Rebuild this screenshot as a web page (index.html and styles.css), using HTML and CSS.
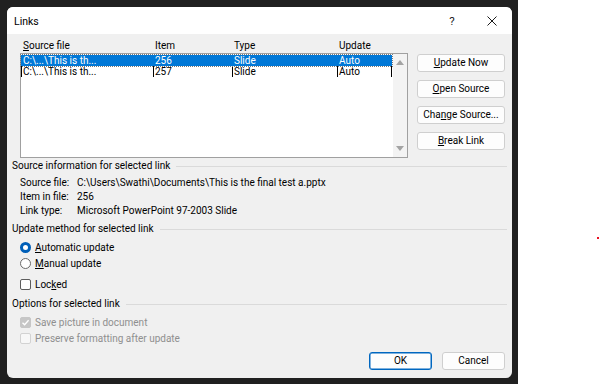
FILE: index.html
```html
<!DOCTYPE html>
<html>
<head>
<meta charset="utf-8">
<link rel="stylesheet" href="styles.css">
</head>
<body>
<div class="screen">
  <div class="frame">
    <div class="dialog">
      <div class="titlebar">
        <span class="title">Links</span>
        <span class="tbtn help">?</span>
        <span class="tbtn close">
          <svg width="10" height="10" viewBox="0 0 10 10"><path d="M0.5 0.5 L9.5 9.5 M9.5 0.5 L0.5 9.5" stroke="#1a1a1a" stroke-width="1" fill="none"/></svg>
        </span>
      </div>
      <div class="body">
        <div class="top">
          <div class="listcol">
            <div class="cols head">
              <span><u>S</u>ource file</span><span>Item</span><span>Type</span><span>Update</span>
            </div>
            <div class="listbox">
              <div class="rows">
                <div class="cols row sel">
                  <span>C:\...\This is th...</span><span>256</span><span>Slide</span><span>Auto</span>
                </div>
                <div class="cols row marked">
                  <span>C:\...\This is th...</span><span>257</span><span>Slide</span><span>Auto</span>
                </div>
              </div>
              <div class="vscroll">
                <svg width="8" height="5" viewBox="0 0 8 5"><path d="M0 5 L4 0 L8 5 Z" fill="#a3a3a3"/></svg>
                <svg width="8" height="5" viewBox="0 0 8 5"><path d="M0 0 L8 0 L4 5 Z" fill="#a3a3a3"/></svg>
              </div>
            </div>
          </div>
          <div class="btncol">
            <div class="btn"><u>U</u>pdate Now</div>
            <div class="btn"><u>O</u>pen Source</div>
            <div class="btn">Cha<u>n</u>ge Source...</div>
            <div class="btn"><u>B</u>reak Link</div>
          </div>
        </div>

        <div class="group g1"><span>Source information for selected link</span><i class="rule"></i></div>
        <div class="info">
          <span>Source file:</span><span>C:\Users\Swathi\Documents\This is the final test a.pptx</span>
          <span>Item in file:</span><span>256</span>
          <span>Link type:</span><span>Microsoft PowerPoint 97-2003 Slide</span>
        </div>

        <div class="group g2"><span>Update method for selected link</span><i class="rule"></i></div>
        <div class="opts first">
          <div class="opt"><i class="radio on"></i><span><u>A</u>utomatic update</span></div>
          <div class="opt"><i class="radio"></i><span><u>M</u>anual update</span></div>
        </div>
        <div class="opts locked">
          <div class="opt"><i class="check"></i><span>Loc<u>k</u>ed</span></div>
        </div>

        <div class="group g3"><span>Options for selected link</span><i class="rule"></i></div>
        <div class="opts first">
          <div class="opt disabled"><i class="check dis-on">
            <svg width="9" height="9" viewBox="0 0 9 9"><path d="M1.5 4.7 L3.6 6.8 L7.6 2.2" stroke="#fff" stroke-width="1.3" fill="none"/></svg>
          </i><span>Save picture in document</span></div>
          <div class="opt disabled"><i class="check dis"></i><span>Preserve formatting after update</span></div>
        </div>

        <div class="footer">
          <div class="btn ok">OK</div>
          <div class="btn">Cancel</div>
        </div>
      </div>
    </div>
  </div>
  <div class="rest"><i class="dot"></i></div>
</div>
</body>
</html>
```

FILE: styles.css
```css
html, body {
  margin: 0;
  padding: 0;
  background: #ffffff;
}
body {
  font-family: Roboto, "Liberation Sans", sans-serif;
  font-size: 10px;
  color: #000;
}
u { text-decoration: underline; text-underline-offset: 1px; }
.screen {
  display: flex;
  width: 600px;
  height: 384px;
}
.frame {
  width: 518px;
  height: 384px;
  box-sizing: border-box;
  padding: 7px 6px 6px 7px;
  background: #202020;
}
.dialog {
  width: 505px;
  height: 371px;
  background: #f0f0f0;
  border-radius: 6px;
  overflow: hidden;
  display: flex;
  flex-direction: column;
}
.titlebar {
  height: 27px;
  background: #ffffff;
  display: flex;
  align-items: center;
  flex: none;
}
.title {
  padding-left: 7px;
  padding-top: 1px;
  font-size: 10.5px;
  flex: 1;
}
.tbtn {
  width: 40px;
  height: 27px;
  display: flex;
  align-items: center;
  justify-content: center;
  font-size: 11.5px;
}
.help { color: #222; }
.body {
  padding: 0 5px 0 5px;
  display: flex;
  flex-direction: column;
}
.top {
  display: flex;
  align-items: flex-start;
}
.listcol {
  margin-left: 8px;
  width: 388px;
}
.cols {
  display: grid;
  grid-template-columns: 132px 79px 105px 55px;
}
.cols > span {
  padding-left: 2px;
  white-space: nowrap;
}
.head {
  margin-top: 5px;
  height: 14px;
  line-height: 14px;
  padding-left: 1px;
}
.listbox {
  height: 105px;
  box-sizing: border-box;
  border: 1px solid #a0a0a0;
  background: #ffffff;
  display: flex;
}
.rows {
  width: 371px;
  padding-top: 1px;
}
.row {
  height: 11px;
  line-height: 11px;
}
.sel {
  background: #0078d7;
  color: #ffffff;
  outline: 1px dotted #7a7a7a;
  outline-offset: 0;
}
.marked > span {
  border-left: 1px solid #000;
  padding-left: 1px;
}
.marked > span:last-child {
  border-right: 1px solid #000;
}
.vscroll {
  margin-left: auto;
  width: 14px;
  background: #f3f3f3;
  display: flex;
  flex-direction: column;
  justify-content: space-between;
  align-items: center;
  padding: 6px 0 6px;
}
.btncol {
  margin-left: 9px;
  margin-top: 20px;
  width: 88px;
  display: flex;
  flex-direction: column;
  gap: 8px;
}
.btn {
  height: 18px;
  box-sizing: border-box;
  border: 1px solid #cfcfcf;
  border-radius: 3px;
  background: #fdfdfd;
  display: flex;
  align-items: center;
  justify-content: center;
  line-height: 14px;
  white-space: nowrap;
}
.group {
  display: flex;
  align-items: center;
  height: 14px;
  line-height: 14px;
  white-space: nowrap;
}
.group .rule {
  flex: 1;
  height: 1px;
  background: #dadada;
  margin-left: 6px;
}
.g1 { margin-top: 1px; }
.g2 { margin-top: 4px; }
.g3 { margin-top: 5px; }
.info {
  margin-top: 3px;
  margin-left: 8px;
  display: grid;
  grid-template-columns: 57px auto;
  grid-auto-rows: 14px;
  line-height: 14px;
  white-space: nowrap;
}
.opts {
  margin-left: 8px;
  display: flex;
  flex-direction: column;
}
.opts.first { margin-top: 3px; }
.opts.locked { margin-top: 5px; }
.opt {
  height: 16px;
  display: flex;
  align-items: center;
  gap: 4px;
  white-space: nowrap;
}
.opt.disabled { color: #8f8f8f; }
.radio {
  width: 11px;
  height: 11px;
  box-sizing: border-box;
  border: 1px solid #6b6b6b;
  border-radius: 50%;
  background: #ffffff;
}
.radio.on {
  border: 3px solid #005fb8;
  background: #ffffff;
}
.check {
  width: 11px;
  height: 11px;
  box-sizing: border-box;
  border: 1px solid #5c5c5c;
  border-radius: 2px;
  background: #ffffff;
  display: flex;
  align-items: center;
  justify-content: center;
}
.check.dis-on {
  border-color: #c6c6c6;
  background: #c6c6c6;
}
.check.dis {
  border-color: #d2d2d2;
  background: #f7f7f7;
}
.footer {
  margin-top: 6px;
  display: flex;
  justify-content: flex-end;
  gap: 10px;
  padding-right: 2px;
}
.footer .btn { width: 63px; }
.btn.ok {
  border-color: #0067c0;
  box-shadow: inset 0 0 0 0.5px #0067c0;
}
.rest {
  flex: 1;
  position: relative;
}
.dot {
  position: absolute;
  left: 79px;
  top: 237px;
  width: 2px;
  height: 2px;
  background: #e81123;
}
```
